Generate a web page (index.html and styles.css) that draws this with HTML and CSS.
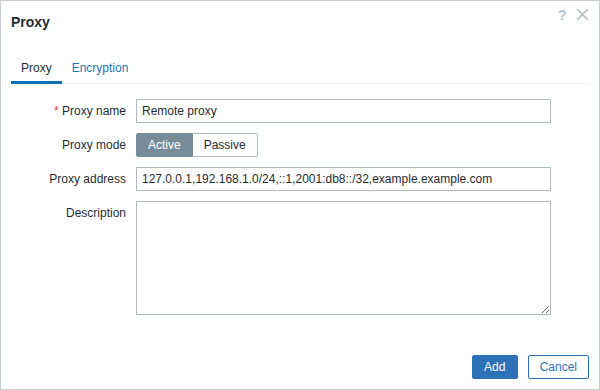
FILE: index.html
```html
<!DOCTYPE html>
<html lang="en">
<head>
    <meta charset="UTF-8">
    <title>Proxy</title>
    <link rel="stylesheet" href="styles.css">
</head>
<body>
    <div class="dialog">
        <div class="dialog-head">
            <h4>Proxy</h4>
            <div class="head-controls">
                <span class="btn-help">?</span>
                <span class="btn-close">
                    <svg width="12" height="12" viewBox="0 0 12 12"><path d="M1 1L11 11M11 1L1 11" stroke="currentColor" stroke-width="1.6"/></svg>
                </span>
            </div>
        </div>

        <div class="dialog-body">
            <ul class="tabs">
                <li class="tab active">Proxy</li>
                <li class="tab">Encryption</li>
            </ul>

            <div class="form-grid">
                <label class="form-label"><span class="required">*</span> Proxy name</label>
                <div class="form-field"><input type="text" class="text-input" value="Remote proxy"></div>

                <label class="form-label">Proxy mode</label>
                <div class="form-field">
                    <div class="radio-group">
                        <span class="radio-btn checked">Active</span>
                        <span class="radio-btn">Passive</span>
                    </div>
                </div>

                <label class="form-label">Proxy address</label>
                <div class="form-field"><input type="text" class="text-input" value="127.0.0.1,192.168.1.0/24,::1,2001:db8::/32,example.example.com"></div>

                <label class="form-label">Description</label>
                <div class="form-field"><textarea class="text-area"></textarea></div>
            </div>
        </div>

        <div class="dialog-footer">
            <button class="btn-primary">Add</button>
            <button class="btn-alt">Cancel</button>
        </div>
    </div>
</body>
</html>
```

FILE: styles.css
```css
* {
    margin: 0;
    padding: 0;
    box-sizing: border-box;
}

body {
    width: 600px;
    height: 390px;
    font-family: 'Liberation Sans', Arial, sans-serif;
    font-size: 12px;
    color: #1f2c33;
    background: #fff;
}

.dialog {
    width: 600px;
    height: 390px;
    border: 1px solid #c5ced3;
    background: #fff;
    display: flex;
    flex-direction: column;
}

.dialog-head {
    height: 43px;
    padding: 0 10px;
    display: flex;
    justify-content: space-between;
}

.dialog-head h4 {
    font-size: 14px;
    font-weight: bold;
    line-height: 42px;
    color: #1f2c33;
}

.head-controls {
    display: flex;
    gap: 9px;
    align-items: flex-start;
    padding-top: 5px;
    color: #b7c4ca;
}

.btn-help {
    font-size: 15px;
    font-weight: bold;
    line-height: 17px;
}

.btn-close {
    display: flex;
    padding-top: 2px;
}

.btn-close svg {
    width: 13px;
    height: 13px;
}

.dialog-body {
    padding: 0 10px;
}

.tabs {
    list-style: none;
    display: flex;
    margin-top: 10px;
    height: 30px;
    border-bottom: 1px solid #ebeef0;
}

.tab {
    padding: 7px 10px 6px;
    line-height: 14px;
    border-bottom: 3px solid transparent;
    color: #1f74b6;
    height: 30px;
}

.tab.active {
    color: #1f2c33;
    border-bottom-color: #0a6fb4;
}

.form-grid {
    display: grid;
    grid-template-columns: 115px 415px;
    column-gap: 10px;
    row-gap: 10px;
    margin-top: 15px;
}

.form-label {
    text-align: right;
    line-height: 24px;
}

.required {
    color: #e33734;
}

.text-input {
    width: 100%;
    height: 24px;
    border: 1px solid #acbbc2;
    padding: 0 5px;
    font-family: inherit;
    font-size: 12px;
    color: #1f2c33;
    outline: none;
}

.text-area {
    width: 100%;
    height: 114px;
    border: 1px solid #acbbc2;
    padding: 4px 5px;
    font-family: inherit;
    font-size: 12px;
    display: block;
    resize: vertical;
}

.radio-group {
    display: flex;
}

.radio-btn {
    height: 24px;
    line-height: 22px;
    padding: 0 11px;
    border: 1px solid #acbbc2;
    background: #fff;
}

.radio-btn:first-child {
    border-radius: 2px 0 0 2px;
}

.radio-btn:last-child {
    border-left: none;
    border-radius: 0 2px 2px 0;
}

.radio-btn.checked {
    background: #768d99;
    border-color: #768d99;
    color: #fff;
}

.dialog-footer {
    margin-top: auto;
    display: flex;
    justify-content: flex-end;
    gap: 10px;
    padding: 0 10px 10px;
}

.btn-primary,
.btn-alt {
    height: 24px;
    padding: 0 11px;
    border-radius: 2px;
    font-family: inherit;
    font-size: 12px;
    cursor: pointer;
}

.btn-primary {
    background: #2d72b6;
    border: 1px solid #2d72b6;
    color: #fff;
    min-width: 46px;
}

.btn-alt {
    background: #fff;
    border: 1px solid #2d72b6;
    color: #2d72b6;
    min-width: 61px;
}
```
